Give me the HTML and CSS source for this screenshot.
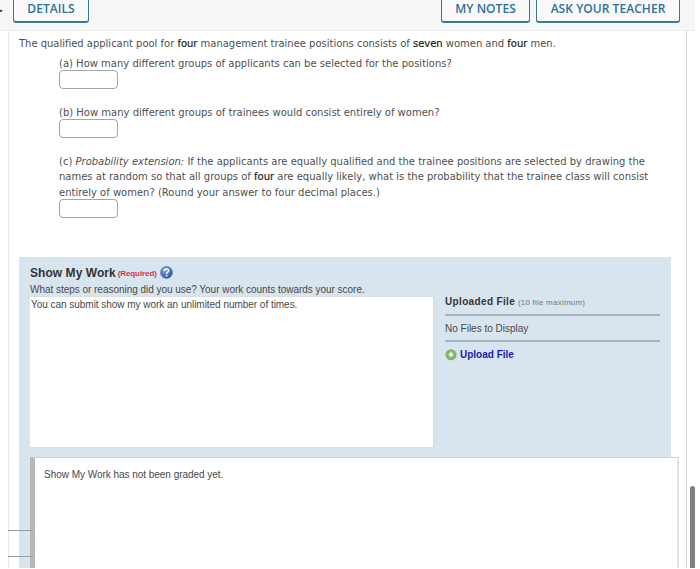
FILE: index.html
```html
<!DOCTYPE html>
<html lang="en">
<head>
    <meta charset="UTF-8">
    <meta name="viewport" content="width=device-width, initial-scale=1.0">
    <title>Homework Question</title>
    <link rel="stylesheet" href="styles.css">
</head>
<body>
    <div class="page">
        <header class="toolbar">
            <span class="number">.</span>
            <button class="btn details">DETAILS</button>
            <button class="btn notes">MY NOTES</button>
            <button class="btn ask">ASK YOUR TEACHER</button>
        </header>

        <main class="panel">
            <div class="question">
                <p class="line intro">The qualified applicant pool for <b>four</b> management trainee positions consists of <b>seven</b> women and <b>four</b> men.</p>
                <div class="part">
                    <p class="line">(a) How many different groups of applicants can be selected for the positions?</p>
                    <input type="text" class="answer">
                </div>
                <div class="part">
                    <p class="line">(b) How many different groups of trainees would consist entirely of women?</p>
                    <input type="text" class="answer">
                </div>
                <div class="part">
                    <p class="line">(c) <i>Probability extension:</i> If the applicants are equally qualified and the trainee positions are selected by drawing the<br>names at random so that all groups of <b>four</b> are equally likely, what is the probability that the trainee class will consist<br>entirely of women? (Round your answer to four decimal places.)</p>
                    <input type="text" class="answer">
                </div>
            </div>

            <section class="work">
                <div class="work-head">
                    <h2>Show My Work</h2>
                    <span class="required">(Required)</span>
                    <svg class="help" viewBox="0 0 13 13">
                        <defs>
                            <radialGradient id="blue" cx="35%" cy="30%" r="75%">
                                <stop offset="0" stop-color="#87a9dc"/>
                                <stop offset="1" stop-color="#24539f"/>
                            </radialGradient>
                        </defs>
                        <circle cx="6.5" cy="6.5" r="6" fill="url(#blue)" stroke="#5c7eb2" stroke-width=".7"/>
                        <path d="M4.4 5C4.4 2.3 8.7 2.2 8.7 4.7C8.7 6.2 6.6 6.2 6.6 7.9M6.6 9.1V10.5" fill="none" stroke="#fff" stroke-width="1.5"/>
                    </svg>
                </div>
                <p class="prompt">What steps or reasoning did you use? Your work counts towards your score.</p>
                <div class="columns">
                    <div class="editor">You can submit show my work an unlimited number of times.</div>
                    <div class="files">
                        <div class="files-head"><strong>Uploaded File</strong> <small>(10 file maximum)</small></div>
                        <div class="files-empty">No Files to Display</div>
                        <a class="upload">
                            <svg class="plus" viewBox="0 0 12 12">
                                <defs>
                                    <radialGradient id="green">
                                        <stop offset="0" stop-color="#9fd27f"/>
                                        <stop offset="1" stop-color="#6fae5c"/>
                                    </radialGradient>
                                </defs>
                                <circle cx="6" cy="5.7" r="5.3" fill="url(#green)" stroke="#8ab57e" stroke-width=".6"/>
                                <path d="M6 3.2V7.7M3.8 5.4H8.2" stroke="#fff" stroke-width="1.5"/>
                            </svg>
                            <span>Upload File</span>
                        </a>
                    </div>
                </div>
                <div class="graded">Show My Work has not been graded yet.</div>
            </section>
            <div class="rules"></div>
        </main>
        <div class="scroll-thumb"></div>
    </div>
</body>
</html>
```

FILE: styles.css
```css
* {
    box-sizing: border-box;
}
body {
    margin: 0;
    background: #fff;
    font-family: "Liberation Sans", Arial, sans-serif;
    color: #484848;
    overflow: hidden;
}
p, h2 {
    margin: 0;
}
.page {
    position: relative;
    width: 695px;
    height: 568px;
    overflow: hidden;
}
.toolbar {
    display: flex;
    height: 31px;
    background: #f6f6f6;
    border-bottom: 1px solid #eee;
}
.number {
    width: 13px;
    height: 23px;
    font: bold 14px/14px "Open Sans", sans-serif;
    text-indent: -1px;
}
.btn {
    height: 23px;
    padding: 0 0 4px;
    background: #f9f9f9;
    border: 1px solid #3e7899;
    border-top: none;
    border-bottom-width: 2px;
    border-radius: 0 0 3px 3px;
    font: 600 12px/17px "Open Sans", sans-serif;
    letter-spacing: 0.05px;
    color: #2f7096;
    white-space: nowrap;
}
.details {
    width: 76px;
}
.notes {
    width: 89px;
    margin-left: 352px;
}
.ask {
    width: 144px;
    margin-left: 6px;
}
.panel {
    position: relative;
    width: 679px;
    height: 537px;
    margin-left: 8px;
    border-left: 1px solid #e8e8e8;
    border-right: 1px solid #d4d4d4;
}
.question {
    height: 226px;
    padding: 5px 0 0 10px;
    font-family: "DejaVu Sans", Verdana, sans-serif;
    font-size: 10px;
    line-height: 15.3px;
    color: #505050;
}
.line {
    white-space: nowrap;
}
.line b {
    font-weight: normal;
    color: #222;
    -webkit-text-stroke: 0.2px #222;
}
.part {
    height: 49px;
    margin-left: 40px;
}
.intro {
    height: 20px;
    letter-spacing: -0.02px;
}
.answer {
    display: block;
    width: 59px;
    height: 19px;
    margin: -1px 0 0;
    padding: 0;
    border: 1px solid #a5a5a5;
    border-radius: 4px;
    background: #fff;
}
.work {
    width: 652px;
    height: 311px;
    margin-left: 10px;
    padding: 8px 0 0 11px;
    background: #d9e5ee;
}
.work-head {
    display: flex;
    align-items: center;
    height: 15px;
}
.work h2 {
    font-size: 12px;
    letter-spacing: 0.05px;
    color: #333;
}
.required {
    margin: 2px 3px 0 2px;
    font-size: 8px;
    font-weight: bold;
    letter-spacing: -0.1px;
    color: #d9303e;
}
.help {
    width: 13px;
    height: 13px;
}
.prompt {
    height: 16px;
    font-size: 10px;
    line-height: 19px;
    letter-spacing: -0.03px;
    white-space: nowrap;
}
.columns {
    display: flex;
    height: 161px;
}
.editor {
    width: 405px;
    height: 152px;
    padding-left: 1px;
    background: #fff;
    border: 1px solid #d9dfe2;
    border-left: none;
    border-right-width: 2px;
    font-size: 10px;
    line-height: 16px;
    letter-spacing: -0.03px;
}
.files {
    width: 215px;
    margin-left: 10px;
    font-size: 10px;
}
.files-head {
    height: 20px;
    border-bottom: 2px solid #a5b4c0;
    line-height: 11px;
    color: #333;
}
.files-head strong {
    letter-spacing: 0.35px;
}
.files-head small {
    font-size: 8px;
    letter-spacing: 0.22px;
    color: #777;
}
.files-empty {
    height: 26px;
    border-bottom: 2px solid #a5b4c0;
    line-height: 26px;
}
.upload {
    display: flex;
    align-items: center;
    gap: 3px;
    height: 25px;
    font-weight: bold;
    color: #1a1ab5;
}
.plus {
    width: 12px;
    height: 12px;
}
.graded {
    width: 649px;
    height: 112px;
    padding: 8px 0 0 9px;
    background: #fff;
    border-left: 5px solid #b8b8b8;
    border-top: 1px solid #cbd1d5;
    border-right: 2px solid #e2e2e2;
    font-size: 10px;
    line-height: 17px;
    letter-spacing: -0.03px;
}
/* stray table lines running over the panel edge */
.rules {
    position: absolute;
    left: -1px;
    top: 499px;
    width: 25px;
    height: 27px;
    border-top: 1px solid #999;
    border-bottom: 1px solid #999;
}
.scroll-thumb {
    position: absolute;
    left: 690px;
    top: 486px;
    width: 5px;
    height: 90px;
    border-radius: 3px;
    background: #808080;
}
```
